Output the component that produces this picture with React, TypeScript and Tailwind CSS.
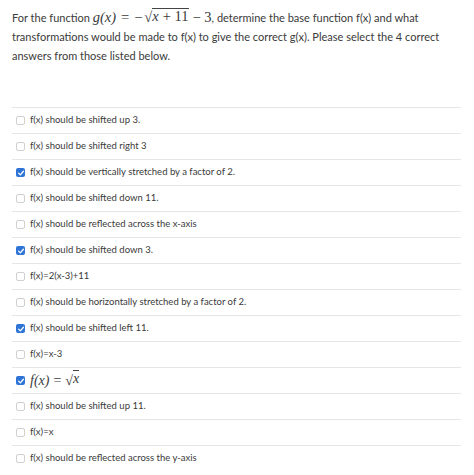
import React from 'react';

const mathFont = { fontFamily: '"Liberation Serif", "DejaVu Serif", serif' };

function Sqrt({ children }: { children: React.ReactNode }) {
  return (
    <span className="inline-flex items-stretch">
      <span className="not-italic">√</span>
      <span className="border-t border-[#444] leading-[13px] pt-px">{children}</span>
    </span>
  );
}

function GMath() {
  return (
    <span className="italic text-[14.5px]" style={mathFont}>
      g(x)<span className="not-italic px-[5px]">=</span>
      <span className="not-italic pr-[2px]">−</span>
      <Sqrt>
        x<span className="not-italic pl-[4px]">+ 11</span>
      </Sqrt>
      <span className="not-italic pl-[4px]">− 3</span>
    </span>
  );
}

function FMath() {
  return (
    <span className="italic text-[14px]" style={mathFont}>
      f(x)<span className="not-italic px-[4px]">=</span>
      <Sqrt>x</Sqrt>
    </span>
  );
}

function Box({ checked }: { checked: boolean }) {
  if (checked) {
    return (
      <span className="flex h-[9px] w-[9px] items-center justify-center rounded-[2px] bg-[#2d74d6]">
        <svg viewBox="0 0 10 10" className="h-[8px] w-[8px]">
          <path d="M2 5.2 L4.2 7.3 L8 2.8" fill="none" stroke="white" strokeWidth="1.6" strokeLinecap="round" strokeLinejoin="round" />
        </svg>
      </span>
    );
  }
  return <span className="h-[9px] w-[9px] rounded-[2px] border border-[#d0d0d0] bg-white" />;
}

const options: { label: React.ReactNode; checked: boolean }[] = [
  { label: 'f(x) should be shifted up 3.', checked: false },
  { label: 'f(x) should be shifted right 3', checked: false },
  { label: 'f(x) should be vertically stretched by a factor of 2.', checked: true },
  { label: 'f(x) should be shifted down 11.', checked: false },
  { label: 'f(x) should be reflected across the x-axis', checked: false },
  { label: 'f(x) should be shifted down 3.', checked: true },
  { label: 'f(x)=2(x-3)+11', checked: false },
  { label: 'f(x) should be horizontally stretched by a factor of 2.', checked: false },
  { label: 'f(x) should be shifted left 11.', checked: true },
  { label: 'f(x)=x-3', checked: false },
  { label: <FMath />, checked: true },
  { label: 'f(x) should be shifted up 11.', checked: false },
  { label: 'f(x)=x', checked: false },
  { label: 'f(x) should be reflected across the y-axis', checked: false },
];

export default function App() {
  return (
    <div className="min-h-[475px] bg-white" style={{ fontFamily: 'Lato, "Open Sans", sans-serif' }}>
      <div className="pl-3 pr-3 pt-[8px]">
        <p className="text-[11px] leading-[19px] text-[#3a3a3a]">
          For the function <GMath />, determine the base function f(x) and what transformations would be made to f(x) to give the correct g(x). Please select the 4 correct answers from those listed below.
        </p>
      </div>
      <ul className="ml-3 mr-[13px] mt-[42px]">
        {options.map((o, i) => (
          <li key={i} className="flex h-[26px] items-center gap-[5px] border-t border-[#e6e6e6] pl-[4px] text-[9.5px] text-[#3a3a3a]">
            <Box checked={o.checked} />
            <span>{o.label}</span>
          </li>
        ))}
      </ul>
    </div>
  );
}
